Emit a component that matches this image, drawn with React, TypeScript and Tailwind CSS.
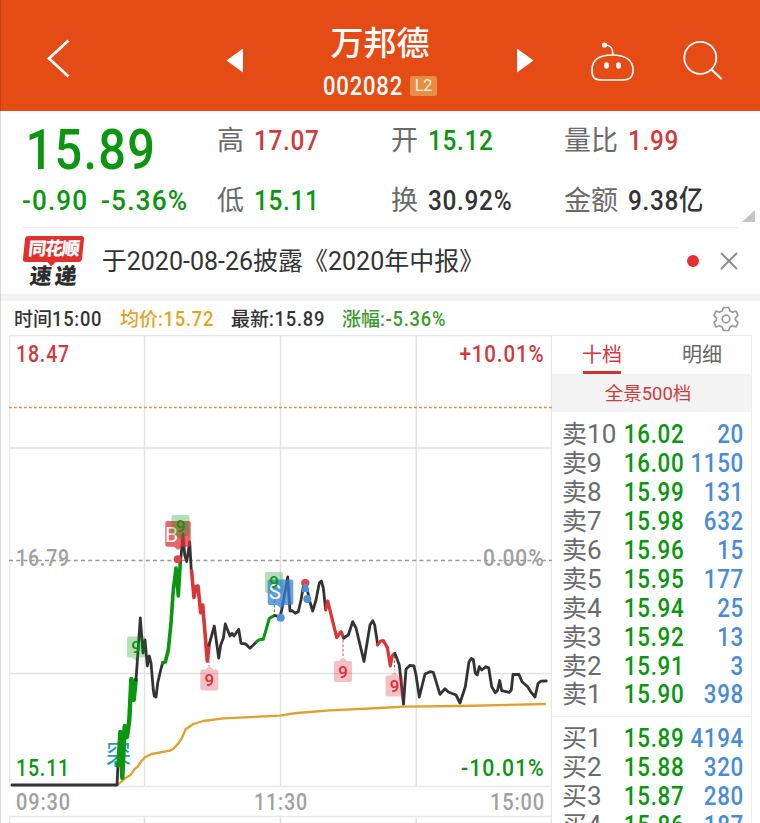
import React from "react";

const sans = "font-['Roboto','Noto_Sans_CJK_SC',sans-serif]";

const sells: [string, string, string][] = [
  ["卖10", "16.02", "20"],
  ["卖9", "16.00", "1150"],
  ["卖8", "15.99", "131"],
  ["卖7", "15.98", "632"],
  ["卖6", "15.96", "15"],
  ["卖5", "15.95", "177"],
  ["卖4", "15.94", "25"],
  ["卖3", "15.92", "13"],
  ["卖2", "15.91", "3"],
  ["卖1", "15.90", "398"],
];

const buys: [string, string, string][] = [
  ["买1", "15.89", "4194"],
  ["买2", "15.88", "320"],
  ["买3", "15.87", "280"],
  ["买4", "15.86", "187"],
];

function Header() {
  return (
    <header className="flex h-[111px] shrink-0 items-center bg-[#e54b15] text-white">
      <svg className="ml-[44px] h-[44px] w-[28px]" viewBox="0 0 28 44" fill="none" stroke="#fff" strokeWidth="2.8">
        <path d="M24.5 8 L5 26 L24.5 44" transform="translate(0 -1.5)" />
      </svg>
      <svg className="mt-[10px] ml-[154px] h-[25px] w-[18px]" viewBox="0 0 18 25" fill="#fff">
        <path d="M0.5 12.5 L17 0.5 V24.5 Z" />
      </svg>
      <div className="ml-[60px] flex w-[152px] flex-col items-center pt-[14px]">
        <h1 className="h-[44px] pt-[2px] text-[33px] leading-[44px] font-medium">万邦德</h1>
        <div className="mt-[3px] flex h-[38px] w-[114px] items-center">
          <span className="w-[87px] origin-left scale-x-[0.85] text-[26px] leading-[38px] font-medium tracking-[0.9px] whitespace-nowrap">002082</span>
          <span className="flex h-[20px] w-[27px] shrink-0 items-center justify-center rounded-[2px] bg-[#e88d45] text-[16px] leading-none text-[#fff3df]">L2</span>
        </div>
      </div>
      <svg className="mt-[10px] ml-[60px] h-[25px] w-[18px]" viewBox="0 0 18 25" fill="#fff">
        <path d="M17.5 12.5 L1 0.5 V24.5 Z" />
      </svg>
      <svg className="mt-[12px] ml-[55px] h-[42px] w-[46px]" viewBox="589 41 46 42" fill="none" stroke="#fff" strokeWidth="1.7">
        <path d="M602 80 C594 80 592 77 592 70 C592 60 599 55 612 55 C625 55 633 60 633 70 C633 77 630 80 622 80 Z" />
        <path d="M605 45 C611 45 613 48 613 55" />
        <circle cx="604.5" cy="45" r="2.6" fill="#fff" stroke="none" />
        <ellipse cx="606.5" cy="65.500" rx="2.4" ry="3.2" fill="#fff" stroke="none" />
        <ellipse cx="618.500" cy="65.500" rx="2.4" ry="3.2" fill="#fff" stroke="none" />
      </svg>
      <svg className="mt-[9px] ml-[46px] h-[42px] w-[42px]" viewBox="681 39 42 42" fill="none" stroke="#fff" strokeWidth="1.8">
        <circle cx="700.3" cy="57.800" r="16" />
        <path d="M711.500 69.500 L721.500 79" strokeWidth="2.3" />
      </svg>
    </header>
  );
}

function Stat({ label, value, color }: { label: string; value: string; color: string }) {
  return (
    <div className="flex h-[60px] items-center whitespace-nowrap">
      <span className="text-[27px] leading-none text-[#6a6a6a]">{label}</span>
      <span className={`ml-[10px] origin-left scale-x-[0.87] text-[28px] leading-none font-medium tracking-[0.8px] ${color}`}>{value}</span>
    </div>
  );
}

function Quote() {
  return (
    <section className="relative flex h-[116px] shrink-0 pl-[22px]">
      <div className="w-[195px]">
        <div className="h-[60px] origin-left scale-x-[0.87] pt-[9px] pl-[4px] text-[56px] leading-[60px] font-medium tracking-[1.500px] text-[#0a960f]">15.89</div>
        <div className="flex h-[60px] items-center text-[28px] leading-none font-medium tracking-[1.2px] whitespace-nowrap text-[#0a960f]">
          <span className="w-[79px] origin-left scale-x-[0.93]">-0.90</span>
          <span className="origin-left scale-x-[0.94]">-5.36%</span>
        </div>
      </div>
      <div className="w-[174px]">
        <Stat label="高" value="17.07" color="text-[#cf3a3c]" />
        <Stat label="低" value="15.11" color="text-[#0a960f]" />
      </div>
      <div className="w-[173px]">
        <Stat label="开" value="15.12" color="text-[#0a960f]" />
        <Stat label="换" value="30.92%" color="text-[#333]" />
      </div>
      <div>
        <Stat label="量比" value="1.99" color="text-[#cf3a3c]" />
        <Stat label="金额" value="9.38亿" color="text-[#333]" />
      </div>
      <svg className="absolute right-[5px] bottom-[5px] h-[12px] w-[13px]" viewBox="0 0 13 12" fill="#c4c4c4">
        <path d="M13 0 V12 H0 Z" />
      </svg>
    </section>
  );
}

function News() {
  return (
    <section className="mx-[22px] flex h-[67px] shrink-0 items-center border-t border-[#efefef]">
      <div className="flex w-[64px] flex-col items-center">
        <div className="relative flex h-[26px] w-[59px] -skew-x-6 items-center justify-center rounded-[3px] bg-[#e0312f] text-[18px] leading-none font-black tracking-[-1.2px] text-white">
          同花顺
          <span className="absolute -bottom-[3px] left-[26px] h-[6px] w-[6px] rotate-45 bg-[#e0312f]" />
        </div>
        <div className="flex h-[25px] -skew-x-6 items-center gap-[3px] pt-[3px] text-[22px] leading-[25px] font-black text-[#2d2d2d]">
          <span>速</span>
          <span>递</span>
        </div>
      </div>
      <p className="mt-[2px] ml-[16px] w-[500px] text-[25px] whitespace-nowrap text-[#333]">于2020-08-26披露《2020年中报》</p>
      <span className="ml-[87px] h-[12px] w-[12px] shrink-0 rounded-full bg-[#e3312f]" />
      <svg className="ml-[21px] h-[18px] w-[18px] shrink-0" viewBox="0 0 18 18" fill="none" stroke="#8e8e8e" strokeWidth="2">
        <path d="M1 1 L17 17 M17 1 L1 17" />
      </svg>
    </section>
  );
}

function InfoItem({ label, value, box }: { label: string; value: string; box: string }) {
  return (
    <span className={`flex items-center ${box}`}>
      {label}
      <span className="origin-left scale-x-[0.94] text-[19.500px] tracking-[0.8px]">{value}</span>
    </span>
  );
}

function InfoBar() {
  return (
    <section className="flex h-[34px] shrink-0 items-center pt-[3px] pl-[14px] text-[19px] font-medium whitespace-nowrap">
      <InfoItem label="时间" value="15:00" box="w-[106px] pt-px text-[#333]" />
      <InfoItem label="均价" value=":15.72" box="w-[111px] pt-px text-[#e6a21f]" />
      <InfoItem label="最新" value=":15.89" box="w-[111px] pt-px text-[#333]" />
      <InfoItem label="涨幅" value=":-5.36%" box="w-[371px] pt-px text-[#3c9a2c]" />
      <svg className="-mt-px h-[26px] w-[26px]" viewBox="0 0 26 26" fill="none" stroke="#999" strokeWidth="1.7" strokeLinejoin="round">
        <path d="M10.500 1.500 H15.500 L17 5 L19.500 6.300 L23 5 L25 9.300 L22.500 12 V14 L25 16.700 L23 21 L19.500 19.700 L17 21 L15.500 24.500 H10.500 L9 21 L6.500 19.700 L3 21 L1 16.700 L3.500 14 V12 L1 9.300 L3 5 L6.500 6.300 L9 5 Z" />
        <circle cx="13" cy="13" r="3.800" />
      </svg>
    </section>
  );
}

type Run = { color: string; points: string; width: number };

const runs: Run[] = [
  { color: "#333", width: 2.8, points: "12,785 117,785 118,764" },
  { color: "#0a960f", width: 4.4, points: "118.500,765 120.300,732 122.300,778 124.700,726 127,737 129.300,720 131.300,679 133.700,700 135.700,680" },
  { color: "#333", width: 2.8, points: "136,680 138.300,647 140.300,618 143,653 145,640 147.300,666 149.300,656 151,663 153.300,690 154.300,696 156,697 157.700,683 160.700,670 162.700,662.700" },
  { color: "#0a960f", width: 3.6, points: "162.700,662.700 165.300,662 168.300,650 171,623.300 173.300,590 176,568 178.300,596 180.300,562" },
  { color: "#333", width: 2.8, points: "180.500,562 183,534 184.700,555 186.700,561.500 189.700,542 191.300,571" },
  { color: "#d93636", width: 3.6, points: "191.600,571 194,597.500 196,586.700 198,586 200.700,612.700 202.700,605 207.300,661 209,645" },
  { color: "#333", width: 2.8, points: "209,645 214.300,626 218.700,658 220.700,645 223.300,638.300 225.300,624 230,636 232,633.300 234,636 238.700,629.300 241,643.300 245.700,644 250,648.300 256.700,641.700" },
  { color: "#0a960f", width: 3, points: "256.700,641.700 258.500,640 263.300,639.300 269.300,618.300 274.300,615.700" },
  { color: "#333", width: 2.8, points: "275,615.700 280,616.700 281.700,610 287.700,577 290,611 292.300,610.700 295.300,613.300 298.300,611.700 301,600 304,583 306,583 309.300,600 312.700,611 316,600 319.300,583 321.300,581 323.300,588 325.700,610" },
  { color: "#d93636", width: 3.2, points: "325.900,609 327.700,601 336.700,637.500 341,631.700 343.700,638" },
  { color: "#333", width: 2.8, points: "343.700,638 348.300,635 352.700,621.700 356,628 364,661.500 370,625 372.700,620.700 374.700,625 377.700,645" },
  { color: "#d93636", width: 3.2, points: "377.700,644.500 380.700,641 383.300,640.700 387.300,647.300 390.300,666 392.300,656 394.300,654" },
  { color: "#333", width: 2.8, points: "395,653.500 399.300,665 403.500,704 406,669.300 410,665.300 414,666 416,675 419.300,697 425,674 430,671.700 433.300,672.300 440,694.300 445,688.700 448.300,692 456,695 460,703 465.300,686.700 469,661.700 471.300,658.500 473.300,659.500 475.300,673.300 477.300,675 479.300,666.700 481.700,670 486,666.700 488.700,667.700 491.700,686.700 495.300,692.700 497.500,690.500 499.700,680.500 501.700,690.700 509.300,692.300 511.300,690 513,674.500 519,674.500 522,681.700 527.700,686.700 530.700,691.700 535,697 538,683.500 540.700,681.200 546.300,681" },
];

const average =
  "117.700,785 125,778.300 130.700,775 134.300,769.300 137.700,766.700 141.700,760.700 145,757.300 151.700,754 170,750.700 174,748.300 178.300,743.300 181.700,738.300 185.700,729.300 193.300,724 203.300,721 223.300,718.300 280,715.700 296.700,713 330,710.300 380,708 403,706.700 460,706 546,704";

function Nine({ x, y, up = false, green = false }: { x: number; y: number; up?: boolean; green?: boolean }) {
  const color = green ? "#0a960f" : "#dc2f35";
  return (
    <g>
      <rect x={x - 9} y={y - 10.5} width="18" height="21" rx="2" fill={color} opacity="0.3" />
      <path d={up ? `M${x - 4} ${y - 10.5} L${x} ${y - 14} L${x + 4} ${y - 10.5} Z` : `M${x - 4} ${y + 10.5} L${x} ${y + 14} L${x + 4} ${y + 10.5} Z`} fill={color} opacity="0.3" />
      <text x={x} y={y + 6} textAnchor="middle" fontSize="17" fontWeight="500" fill={color}>9</text>
    </g>
  );
}

function AxisLabel({ x, y, width, color, children }: { x: number; y: number; width: number; color: string; children: string }) {
  return (
    <text x={x} y={y} fill={color} fontSize="23" fontWeight="500" letterSpacing="1" textLength={width} lengthAdjust="spacingAndGlyphs">
      {children}
    </text>
  );
}

function Chart() {
  return (
    <svg className="h-[488px] w-[543px] shrink-0" viewBox="9 335 543 488" fill="none">
      <g stroke="#e2e2e2" strokeWidth="1.500">
        <path d="M9.500 786 V335.500 H552 M9.500 786.500 H552 M9.500 823 V816.500 H552 M551.500 336 V823" stroke="#e8e8e8" />
        <path d="M144.500 336 V786 M280.500 336 V786 M416.300 336 V786 M144.500 817 V823 M280.500 817 V823 M416.300 817 V823 M10 448 H552 M10 673.500 H552" />
      </g>
      <path d="M9 407.500 H552" stroke="#cf9350" strokeWidth="1.500" strokeDasharray="2.800 2.200" />
      <path d="M9 560.500 H552" stroke="#999" strokeWidth="1.400" strokeDasharray="4 3.200" />
      <AxisLabel x={16} y={361.5} width={54} color="#cf3a3c">18.47</AxisLabel>
      <AxisLabel x={459.5} y={361.5} width={85} color="#cf3a3c">+10.01%</AxisLabel>
      <AxisLabel x={16} y={566} width={54} color="#a0a0a0">16.79</AxisLabel>
      <AxisLabel x={483} y={566} width={61.5} color="#a0a0a0">0.00%</AxisLabel>
      <AxisLabel x={16} y={776} width={54} color="#0a960f">15.11</AxisLabel>
      <AxisLabel x={461} y={776} width={83.5} color="#0a960f">-10.01%</AxisLabel>
      <AxisLabel x={16} y={810} width={55} color="#a0a0a0">09:30</AxisLabel>
      <AxisLabel x={254} y={810} width={54} color="#a0a0a0">11:30</AxisLabel>
      <AxisLabel x={490} y={810} width={55} color="#a0a0a0">15:00</AxisLabel>
      <text x="105.500" y="764" fontSize="26" fill="#1f9bb8">罙</text>
      <rect x="114.500" y="761" width="6" height="6" fill="#1f9bb8" />
      <polyline points={average} stroke="#e0a02e" strokeWidth="2.300" strokeLinejoin="round" />
      {runs.map((r, i) => (
        <polyline key={i} points={r.points} stroke={r.color} strokeWidth={r.width} strokeLinejoin="round" strokeLinecap="round" />
      ))}
      <path d="M209 656 V666 M343 640 V656 M394.500 656 V670" stroke="#b05060" strokeDasharray="2.500 2" />
      <path d="M274.300 596 V614" stroke="#0a960f" strokeDasharray="2.500 2" />
      <path d="M167 521 H189 Q190.700 521 190.700 523 V545 Q190.700 546.700 189 546.700 H182 L178 550 L174 546.700 H167 Q165.300 546.700 165.300 545 V523 Q165.300 521 167 521 Z" fill="#df3337" opacity="0.75" />
      <text x="165" y="541.500" fontSize="21" fill="#fff">B</text>
      <Nine x={180.5} y={525.5} green />
      <circle cx="177.700" cy="559.300" r="4" fill="#df4548" />
      <Nine x={136} y={647} green />
      <Nine x={209.3} y={680} up />
      <Nine x={343} y={671.5} up />
      <Nine x={394.5} y={686} up />
      <rect x="265" y="572" width="18" height="21" rx="2" fill="#0a960f" opacity="0.3" />
      <path d="M269.500 579.500 H291.500 Q293.300 579.500 293.300 581 V603 Q293.300 605 291.500 605 H285 L281 608.500 L277 605 H269.500 Q267.700 605 267.700 603 V581 Q267.700 579.500 269.500 579.500 Z" fill="#347fd6" opacity="0.75" />
      <text x="275" y="599" textAnchor="middle" fontSize="20" fill="#fff">S</text>
      <text x="274.200" y="587.500" textAnchor="middle" fontSize="17" fontWeight="500" fill="#0a960f">9</text>
      <circle cx="280.700" cy="617.800" r="4" fill="#4f8fe0" />
      <circle cx="305.300" cy="583" r="4.200" fill="#df4548" />
      <path d="M302 592 Q302 584 305.300 583.500 Q308.500 584 309 592 Z" fill="#4f8fe0" />
      <circle cx="307.300" cy="599" r="4" fill="#4f8fe0" />
    </svg>
  );
}

function Row({ row }: { row: [string, string, string] }) {
  return (
    <div className="flex h-[28.9px] shrink-0 items-center pr-[7px] pl-[10px] text-[26px] leading-none whitespace-nowrap">
      <span className="w-[61px] shrink-0 text-[#6b6b6b]">
        <span className="text-[25px]">{row[0].slice(0, 1)}</span>
        {row[0].slice(1)}
      </span>
      <span className="w-[52px] shrink-0 origin-left scale-x-[0.86] font-medium tracking-[0.8px] text-[#0a960f]">
        <span className="ml-px">{row[1]}</span>
      </span>
      <span className="flex-1 origin-right scale-x-[0.86] text-right font-medium tracking-[0.8px] text-[#4a8bd8]">{row[2]}</span>
    </div>
  );
}

function Book() {
  return (
    <aside className="flex h-[488px] w-[200px] shrink-0 flex-col overflow-hidden border-t border-r border-[#ededed]">
      <div className="flex h-[38px] shrink-0 text-[20px] leading-[38px]">
        <div className="ml-[30px] flex w-[40px] flex-col text-[#d3393c]">
          <span className="h-[35px] whitespace-nowrap">十档</span>
          <span className="mx-[1px] h-[3px] shrink-0 bg-[#cf3335]" />
        </div>
        <span className="ml-[60px] text-[#666]">明细</span>
      </div>
      <div className="mb-[8px] h-[38px] shrink-0 bg-[#f3f3f3] pr-[7px] text-center text-[18.500px] leading-[40px] text-[#cf3a3c]">全景500档</div>
      {sells.map((r) => (
        <Row key={r[0]} row={r} />
      ))}
      <div className="mt-[7px] mb-[7px] h-px shrink-0 bg-[#ededed]" />
      {buys.map((r) => (
        <Row key={r[0]} row={r} />
      ))}
    </aside>
  );
}

export default function App() {
  return (
    <div className={`${sans} relative flex h-[823px] w-[760px] flex-col overflow-hidden bg-white`}>
      <Header />
      <Quote />
      <News />
      <div className="h-[7px] shrink-0 bg-[#f2f2f2]" />
      <InfoBar />
      <main className="flex pl-[9px]">
        <Chart />
        <Book />
      </main>
      <span className="absolute inset-y-0 left-0 w-px bg-black/15" />
    </div>
  );
}
